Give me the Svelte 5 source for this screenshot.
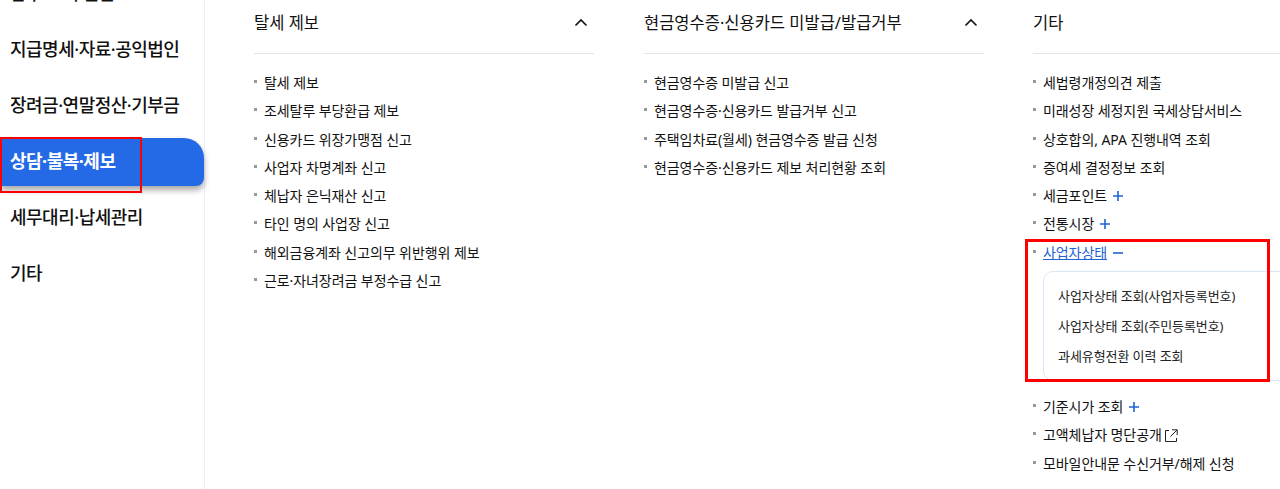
<script>
	const sideItems = ['납부·고지·환급', '지급명세·자료·공익법인', '장려금·연말정산·기부금', '상담·불복·제보', '세무대리·납세관리', '기타'];

	const columns = [
		{
			title: '탈세 제보',
			fold: true,
			links: [
				{ label: '탈세 제보' },
				{ label: '조세탈루 부당환급 제보' },
				{ label: '신용카드 위장가맹점 신고' },
				{ label: '사업자 차명계좌 신고' },
				{ label: '체납자 은닉재산 신고' },
				{ label: '타인 명의 사업장 신고' },
				{ label: '해외금융계좌 신고의무 위반행위 제보' },
				{ label: '근로·자녀장려금 부정수급 신고' }
			]
		},
		{
			title: '현금영수증·신용카드 미발급/발급거부',
			fold: true,
			links: [
				{ label: '현금영수증 미발급 신고' },
				{ label: '현금영수증·신용카드 발급거부 신고' },
				{ label: '주택임차료(월세) 현금영수증 발급 신청' },
				{ label: '현금영수증·신용카드 제보 처리현황 조회' }
			]
		},
		{
			title: '기타',
			fold: false,
			links: [
				{ label: '세법령개정의견 제출' },
				{ label: '미래성장 세정지원 국세상담서비스' },
				{ label: '상호합의, APA 진행내역 조회' },
				{ label: '증여세 결정정보 조회' },
				{ label: '세금포인트', mark: 'plus' },
				{ label: '전통시장', mark: 'plus' },
				{
					label: '사업자상태',
					mark: 'minus',
					open: true,
					sub: ['사업자상태 조회(사업자등록번호)', '사업자상태 조회(주민등록번호)', '과세유형전환 이력 조회']
				},
				{ label: '기준시가 조회', mark: 'plus' },
				{ label: '고액체납자 명단공개', mark: 'ext' },
				{ label: '모바일안내문 수신거부/해제 신청' }
			]
		}
	];
</script>

<div class="page">
	<nav class="side">
		{#each sideItems as item, i}
			<a href="#top" class="side-item" class:active={i === 3}>
				<span>{item}</span>
				{#if i === 3}<i class="hl"></i>{/if}
			</a>
		{/each}
	</nav>

	<main class="cols">
		{#each columns as col}
			<section class="col">
				<header class="col-head">
					<h3>{col.title}</h3>
					{#if col.fold}
						<svg width="14" height="9" viewBox="0 0 14 9" fill="none" stroke="#111" stroke-width="1.6">
							<path d="M1.5 7.5 7 2l5.5 5.5" />
						</svg>
					{/if}
				</header>
				<ul>
					{#each col.links as link}
						<li>
							<a href="#top" class:open={link.open}>{link.label}</a>
							{#if link.mark === 'plus'}
								<svg class="mark" width="10" height="10" viewBox="0 0 10 10" stroke="#1f63d6" stroke-width="1.6">
									<path d="M0 5h10M5 0v10" />
								</svg>
							{:else if link.mark === 'minus'}
								<svg class="mark" width="10" height="10" viewBox="0 0 10 10" stroke="#1f63d6" stroke-width="1.6">
									<path d="M0 5h10" />
								</svg>
							{:else if link.mark === 'ext'}
								<svg class="ext" width="13" height="13" viewBox="0 0 13 13" fill="none" stroke="#222" stroke-width="1">
									<path d="M4 1.5H.5v11h11V9M7 .8h5.2V6M12 1 5.5 7.5" />
								</svg>
							{/if}
							{#if link.sub}
								<div class="sub">
									{#each link.sub as s}
										<a href="#top">{s}</a>
									{/each}
								</div>
							{/if}
						</li>
					{/each}
				</ul>
			</section>
		{/each}
		<i class="hl-box"></i>
	</main>
</div>

<style>
	:global(body) {
		margin: 0;
		background: #fff;
	}

	.page {
		display: flex;
		height: 489px;
		overflow: hidden;
		font-family: 'Noto Sans', 'Noto Sans CJK KR', sans-serif;
		color: #111;
	}

	a {
		color: inherit;
		text-decoration: none;
	}

	.side {
		flex: none;
		width: 204px;
		margin-top: -30px;
		height: 540px;
		border-right: 1px solid #eef0fb;
		display: flex;
		flex-direction: column;
	}

	.side-item {
		position: relative;
		flex: none;
		box-sizing: border-box;
		height: 48px;
		margin-bottom: 8px;
		padding: 0 0 4px 10px;
		display: flex;
		align-items: center;
		font-size: 18px;
		font-weight: 500;
		letter-spacing: -0.5px;
	}

	.side-item.active {
		background: #2469e6;
		color: #fff;
		font-weight: 700;
		border-radius: 0 20px 8px 0;
		box-shadow: 0 4px 6px rgba(0, 0, 0, 0.35);
	}

	.hl {
		position: absolute;
		left: 0;
		top: -1px;
		width: 138px;
		height: 52px;
		border: 2px solid #f00;
	}

	.cols {
		position: relative;
		flex: 1;
		display: flex;
		gap: 50px;
		padding-left: 49px;
		min-width: 0;
	}

	.col {
		flex: none;
		width: 340px;
	}

	.col:last-of-type {
		margin-left: -1px;
	}

	.col-head {
		height: 53px;
		border-bottom: 1px solid #e5e5e5;
		display: flex;
		align-items: center;
		justify-content: space-between;
		padding-right: 6px;
	}

	.col-head h3 {
		margin: 0 0 10px;
		font-size: 16.5px;
		font-weight: 400;
	}

	.col-head svg {
		margin-bottom: 8px;
	}

	ul {
		list-style: none;
		margin: 15px 0 0;
		padding: 0;
	}

	li {
		position: relative;
		padding-left: 10px;
		font-size: 14px;
		line-height: 28.3px;
		letter-spacing: -0.08px;
		white-space: nowrap;
	}

	li::before {
		content: '';
		position: absolute;
		left: 0;
		top: 11px;
		width: 3px;
		height: 3px;
		background: #999;
	}

	li > a.open {
		color: #1f63d6;
		text-decoration: underline;
	}

	.mark {
		margin-left: 2px;
	}

	.ext {
		vertical-align: -2px;
	}

	.sub {
		margin: 4px 0 12px;
		width: 300px;
		height: 110px;
		padding: 9px 14px;
		box-sizing: border-box;
		border: 1px solid #dbe5f6;
		border-radius: 10px;
		display: flex;
		flex-direction: column;
	}

	.sub a {
		font-size: 13px;
		line-height: 30px;
		color: #222;
	}

	.hl-box {
		position: absolute;
		left: 820px;
		top: 239px;
		width: 239px;
		height: 137px;
		border: 3px solid #f00;
	}
</style>
